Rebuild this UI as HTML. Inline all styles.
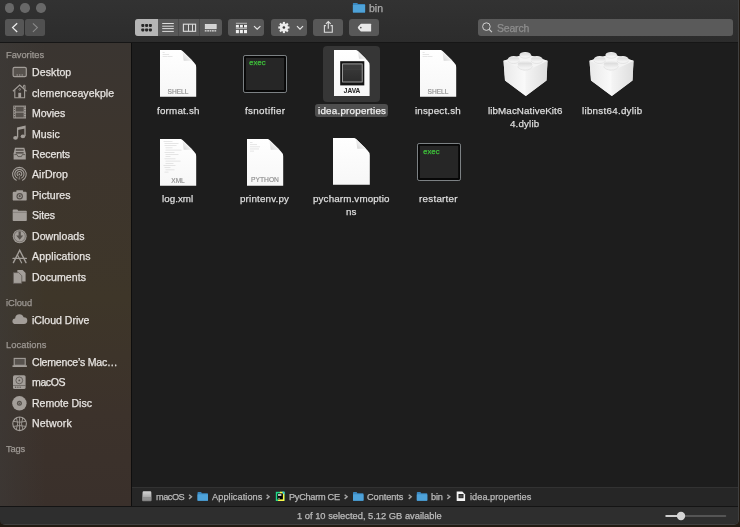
<!DOCTYPE html>
<html><head><meta charset="utf-8"><style>
*{margin:0;padding:0;box-sizing:border-box}
html,body{width:740px;height:527px;overflow:hidden;background:#221a12;font-family:"Liberation Sans",sans-serif}
.t{position:absolute;line-height:0;white-space:nowrap;will-change:transform;-webkit-text-stroke:0.25px currentColor}
.a{position:absolute}
svg{position:absolute;overflow:visible}
</style></head><body>
<div class="a" style="left:0;top:0;width:739px;height:525px;background:#404040;border-radius:0 0 5px 5px;overflow:hidden">
<div class="a" style="left:0;top:0;width:738px;height:524px;background:#1d1d1d;border-radius:0 0 4px 4px;overflow:hidden">
<div class="a" style="left:0;top:0;width:739px;height:43px;background:linear-gradient(#323232,#2c2c2c)"></div>
<div class="a" style="left:0;top:42px;width:739px;height:1px;background:#161616"></div>
<div class="a" style="left:4.60px;top:3.05px;width:9.6px;height:9.6px;border-radius:50%;background:#686868"></div>
<div class="a" style="left:20.40px;top:3.05px;width:9.6px;height:9.6px;border-radius:50%;background:#686868"></div>
<div class="a" style="left:36.20px;top:3.05px;width:9.6px;height:9.6px;border-radius:50%;background:#686868"></div>
<div class="a" style="left:5px;top:19px;width:19px;height:17px;background:#565656;border-radius:2.5px"></div>
<div class="a" style="left:25.4px;top:19px;width:19.6px;height:17px;background:#505050;border-radius:2.5px"></div>
<svg style="left:0;top:0" width="60" height="43">
<path d="M17.2 23.2 L12.6 27.6 L17.2 32" fill="none" stroke="#ebebeb" stroke-width="1.3"/>
<path d="M32.9 23.3 L37.4 27.6 L32.9 31.9" fill="none" stroke="#8a8a8a" stroke-width="1.1"/>
</svg>
<div class="a" style="left:135px;top:19px;width:87px;height:17px;background:#585858;border-radius:3px"></div>
<div class="a" style="left:135px;top:19px;width:23px;height:17px;background:#b5b5b5;border-radius:3px 0 0 3px"></div>
<div class="a" style="left:178.3px;top:19px;width:1px;height:17px;background:#4a4a4a"></div>
<div class="a" style="left:199px;top:19px;width:1px;height:17px;background:#4a4a4a"></div>
<svg style="left:0;top:0" width="230" height="43">
<g fill="#262626"><rect x="141.3" y="23.9" width="3" height="3" rx="0.8"/><rect x="141.3" y="28.4" width="3" height="3" rx="0.8"/><rect x="145.1" y="23.9" width="3" height="3" rx="0.8"/><rect x="145.1" y="28.4" width="3" height="3" rx="0.8"/><rect x="148.9" y="23.9" width="3" height="3" rx="0.8"/><rect x="148.9" y="28.4" width="3" height="3" rx="0.8"/></g>
<g fill="#dcdcdc"><rect x="162.2" y="23" width="11.6" height="1"/><rect x="162.2" y="25.7" width="11.6" height="1"/><rect x="162.2" y="28.1" width="11.6" height="1"/><rect x="162.2" y="30.9" width="11.6" height="1"/></g>
<rect x="183.4" y="24.2" width="12.2" height="7.1" fill="none" stroke="#dcdcdc" stroke-width="1.1"/>
<path d="M188.5 24.2 V31.3 M192.5 24.2 V31.3" stroke="#dcdcdc" stroke-width="1"/>
<rect x="205.2" y="24.3" width="11" height="4.5" fill="#d2d2d2"/>
<rect x="205.2" y="24.3" width="11" height="4.5" fill="none" stroke="#eeeeee" stroke-width="0.6"/>
<g fill="#dcdcdc"><rect x="204.80" y="30.2" width="1.8" height="1.3"/><rect x="207.20" y="30.2" width="1.8" height="1.3"/><rect x="209.60" y="30.2" width="1.8" height="1.3"/><rect x="212.00" y="30.2" width="1.8" height="1.3"/><rect x="214.40" y="30.2" width="1.8" height="1.3"/></g>
</svg>
<div class="a" style="left:228px;top:19px;width:36px;height:17px;background:#585858;border-radius:3px"></div>
<svg style="left:0;top:0" width="320" height="43">
<rect x="235.9" y="22.8" width="11.1" height="0.9" fill="#c4c4c4"/>
<rect x="235.9" y="24.9" width="11.1" height="2.6" fill="#3a3a3a"/>
<rect x="235.9" y="27.8" width="11.1" height="1" fill="#bdbdbd"/>
<rect x="235.9" y="24.9" width="3" height="2.6" fill="#f0f0f0"/><rect x="235.9" y="29.9" width="3" height="3.3" fill="#f0f0f0"/><rect x="239.9" y="24.9" width="3" height="2.6" fill="#f0f0f0"/><rect x="239.9" y="29.9" width="3" height="3.3" fill="#f0f0f0"/><rect x="244" y="24.9" width="3" height="2.6" fill="#f0f0f0"/><rect x="244" y="29.9" width="3" height="3.3" fill="#f0f0f0"/>
<path d="M254 26.1 L257.2 29.2 L260.4 26.1" fill="none" stroke="#e6e6e6" stroke-width="1.2"/>
</svg>
<div class="a" style="left:271px;top:19px;width:36px;height:17px;background:#585858;border-radius:3px"></div>
<svg style="left:0;top:0" width="320" height="43">
<g transform="translate(283.9,27.5)" fill="#ececec"><circle r="4.1"/><rect x="-1.05" y="-5.6" width="2.1" height="11.2" transform="rotate(0)"/><rect x="-1.05" y="-5.6" width="2.1" height="11.2" transform="rotate(45)"/><rect x="-1.05" y="-5.6" width="2.1" height="11.2" transform="rotate(90)"/><rect x="-1.05" y="-5.6" width="2.1" height="11.2" transform="rotate(135)"/><circle r="1.3" fill="#3a3a3a"/></g>
<path d="M297 26.1 L300 29.1 L303 26.1" fill="none" stroke="#e6e6e6" stroke-width="1.2"/>
</svg>
<div class="a" style="left:313px;top:19px;width:30px;height:17px;background:#585858;border-radius:3px"></div>
<svg style="left:0;top:0" width="400" height="43">
<path d="M325.9 25.6 H324.4 V32.3 H332.3 V25.6 H330.6" fill="none" stroke="#dcdcdc" stroke-width="1.1"/>
<path d="M328.3 21.8 V28.7 M325.9 23.9 L328.3 21.5 L330.7 23.9" fill="none" stroke="#dcdcdc" stroke-width="1.1"/>
</svg>
<div class="a" style="left:349px;top:19px;width:30px;height:17px;background:#585858;border-radius:3px"></div>
<svg style="left:0;top:0" width="400" height="43">
<path d="M357.8 27.6 Q357.8 27 358.3 26.4 L360.6 23.9 Q360.9 23.7 361.3 23.7 H370.6 Q371.1 23.7 371.1 24.2 V31.1 Q371.1 31.6 370.6 31.6 H361.3 Q360.9 31.6 360.6 31.3 L358.3 28.8 Q357.8 28.2 357.8 27.6 Z" fill="#e8e8e8"/>
<circle cx="360.8" cy="27.6" r="0.85" fill="#555"/>
</svg>
<svg style="left:0;top:0" width="400" height="43">
<path d="M352.9 3.6 Q352.9 3 353.5 3 H357.1 L358.1 4 H364.5 Q365.1 4 365.1 4.6 V11.9 Q365.1 12.5 364.5 12.5 H353.5 Q352.9 12.5 352.9 11.9 Z" fill="#3a88bf"/>
<rect x="352.9" y="5" width="12.2" height="7.5" rx="0.5" fill="#4ea2d8"/>
</svg>
<div class="t" style="left:368.80px;top:7.86px;font-size:10.5px;letter-spacing:-0.009px;color:#ababab;">bin</div>
<div class="a" style="left:478px;top:19px;width:255px;height:17px;background:#5a5a5a;border-radius:3px"></div>
<svg style="left:0;top:0" width="740" height="43">
<circle cx="486.4" cy="26.6" r="3.8" fill="none" stroke="#d0d0d0" stroke-width="1"/>
<path d="M489.2 29.4 L491.9 32.2" stroke="#d0d0d0" stroke-width="1.2"/>
</svg>
<div class="t" style="left:496.80px;top:27.56px;font-size:10.5px;letter-spacing:-0.197px;color:#8e8e8e;">Search</div>
<div class="a" style="left:0;top:43px;width:131px;height:463px;background:linear-gradient(90deg,rgba(62,60,58,0.55) 0%,rgba(62,60,58,0) 35%),linear-gradient(180deg,#3a3531 0%,#3d352d 25%,#3e3629 55%,#3c322b 80%,#3a302b 100%)"></div>
<div class="a" style="left:131px;top:43px;width:1px;height:463px;background:#0e0e0e"></div>
<svg style="left:0;top:0" width="131" height="527">
<g fill="none" stroke="#a39e99" stroke-width="1.1">
</g>
<!-- desktop -->
<rect x="13.1" y="67.3" width="13.2" height="9.4" rx="1.4" fill="#57524d" stroke="#a39e99" stroke-width="1.2"/>
<g fill="#a39e99"><rect x="16.6" y="74.4" width="1.2" height="1.2"/><rect x="19.1" y="74.4" width="1.2" height="1.2"/><rect x="21.6" y="74.4" width="1.2" height="1.2"/></g>
<!-- home -->
<path d="M12.9 91.2 L19.7 85 L26.5 91.2" fill="none" stroke="#a39e99" stroke-width="1.2"/>
<path d="M23.6 87.6 V85.3 H25 V89" fill="none" stroke="#a39e99" stroke-width="1"/>
<path d="M14.8 90 V97.7 H24.6 V90" fill="none" stroke="#a39e99" stroke-width="1.1"/>
<rect x="18.3" y="92.8" width="2.8" height="5" fill="#a39e99"/>
<circle cx="19.7" cy="89.4" r="0.9" fill="none" stroke="#a39e99" stroke-width="0.7"/>
<!-- movies -->
<rect x="13.3" y="105.6" width="12.7" height="12.9" fill="#a39e99"/>
<rect x="15.6" y="106.7" width="8.1" height="4.9" fill="#57524d"/>
<rect x="15.6" y="112.6" width="8.1" height="4.8" fill="#57524d"/>
<g fill="#57524d"><rect x="14.0" y="106.40" width="1" height="1.2"/><rect x="14.0" y="108.85" width="1" height="1.2"/><rect x="14.0" y="111.30" width="1" height="1.2"/><rect x="14.0" y="113.75" width="1" height="1.2"/><rect x="14.0" y="116.20" width="1" height="1.2"/><rect x="24.4" y="106.40" width="1" height="1.2"/><rect x="24.4" y="108.85" width="1" height="1.2"/><rect x="24.4" y="111.30" width="1" height="1.2"/><rect x="24.4" y="113.75" width="1" height="1.2"/><rect x="24.4" y="116.20" width="1" height="1.2"/></g>
<!-- music -->
<path d="M17.6 137.5 V128 L25 126.3 V136" fill="none" stroke="#a39e99" stroke-width="1.3"/>
<path d="M17.6 128 L25 126.3 V128.4 L17.6 130.1 Z" fill="#a39e99"/>
<ellipse cx="15.5" cy="137.9" rx="2.3" ry="1.8" fill="#a39e99"/>
<ellipse cx="22.9" cy="136.4" rx="2.3" ry="1.8" fill="#a39e99"/>
<!-- recents -->
<path d="M13.6 153.2 L15 147.8 H24.4 L25.8 153.2 V159.6 H13.6 Z" fill="#a39e99"/>
<rect x="15.8" y="149.2" width="7.8" height="1.6" fill="#57524d"/>
<rect x="15.8" y="152" width="7.8" height="1.6" fill="#57524d"/>
<path d="M14.4 154.6 H17 L18 156.6 H21.4 L22.4 154.6 H25" fill="none" stroke="#57524d" stroke-width="0.9"/>
<!-- airdrop -->
<g fill="none" stroke="#a39e99" stroke-width="1.1">
<path d="M16.6 180.4 A6.8 6.8 0 1 1 22.2 180.4"/>
<path d="M17.5 178.2 A4.6 4.6 0 1 1 21.3 178.2"/>
<path d="M18.4 176.1 A2.4 2.4 0 1 1 20.4 176.1"/>
</g>
<circle cx="19.4" cy="174.2" r="0.9" fill="#a39e99"/>
<path d="M19.4 175 L20.6 179.5 H18.2 Z" fill="#a39e99" opacity="0.6"/>
<!-- pictures -->
<rect x="12.7" y="191.8" width="14" height="8.8" rx="1.2" fill="#a39e99"/>
<rect x="16.3" y="190.2" width="6.8" height="2" rx="0.6" fill="#a39e99"/>
<circle cx="19.7" cy="196.2" r="3.2" fill="#57524d"/>
<circle cx="19.7" cy="196.2" r="2" fill="#a39e99"/>
<circle cx="19.7" cy="196.2" r="1.1" fill="#57524d"/>
<!-- sites (folder) -->
<path d="M12.7 210.3 Q12.7 209.5 13.5 209.5 H17.3 L18.3 210.8 H26 Q26.8 210.8 26.8 211.6 V220.3 Q26.8 221 26 221 H13.5 Q12.7 221 12.7 220.3 Z" fill="#a39e99"/>
<rect x="12.7" y="211.9" width="14.1" height="0.7" fill="#57524d" opacity="0.5"/>
<!-- downloads -->
<circle cx="19.7" cy="236.3" r="6.9" fill="#a39e99"/>
<circle cx="19.7" cy="236.3" r="5.6" fill="none" stroke="#57524d" stroke-width="0.6"/>
<path d="M18.6 231.5 H20.8 V235.6 H23.2 L19.7 239.8 L16.2 235.6 H18.6 Z" fill="#57524d"/>
<!-- applications -->
<g fill="none" stroke="#a39e99" stroke-width="1.2" stroke-linecap="round">
<path d="M13.4 262.6 L19.7 250.2 L26 262.6" stroke-width="1.4"/>
<path d="M13 258.4 H26.4"/>
<path d="M17.4 254.8 L21.6 262.8"/>
</g>
<!-- documents -->
<path d="M17.4 269.9 H22.6 L25.6 273 V281.4 H17.4 Z" fill="#a39e99"/>
<path d="M13.3 272.6 H18.7 L21.8 275.7 V283.4 H13.3 Z" fill="#a39e99" stroke="#57524d" stroke-width="0.7"/>
<!-- icloud -->
<path d="M15.6 324 Q12.4 324 12.4 321.2 Q12.4 318.6 15.1 318.4 Q15.6 314.2 19.5 314.2 Q22.6 314.2 23.6 317.3 Q27.3 317.3 27.3 320.6 Q27.3 324 24 324 Z" fill="#a39e99"/>
<!-- laptop -->
<rect x="14.2" y="358.4" width="11" height="6.9" fill="#57524d" stroke="#a39e99" stroke-width="1.1"/>
<rect x="12.5" y="365.3" width="14.4" height="1.7" fill="#a39e99"/>
<!-- macOS drive -->
<rect x="13" y="375.2" width="12.6" height="13.8" rx="1.6" fill="#a39e99"/>
<circle cx="19.3" cy="380.4" r="3.4" fill="none" stroke="#57524d" stroke-width="0.8"/>
<circle cx="19.3" cy="380.4" r="0.9" fill="#57524d"/>
<rect x="13" y="385.2" width="12.6" height="0.6" fill="#57524d"/>
<g fill="#57524d"><rect x="15" y="386.6" width="1.2" height="1.2"/><rect x="17.3" y="386.6" width="1.2" height="1.2"/><rect x="19.6" y="386.6" width="1.2" height="1.2"/></g>
<!-- remote disc -->
<circle cx="19.4" cy="403.3" r="7.2" fill="#a39e99"/>
<circle cx="19.4" cy="403.3" r="2.5" fill="#57524d"/>
<circle cx="19.4" cy="403.3" r="1.3" fill="#8a857f"/>
<circle cx="19.4" cy="403.3" r="0.6" fill="#57524d"/>
<!-- network -->
<g fill="none" stroke="#a39e99" stroke-width="0.9">
<circle cx="19.6" cy="423.8" r="6.8" stroke-width="1.1"/>
<path d="M13.3 421.4 Q19.6 423 25.9 421.4 M13.3 426.4 Q19.6 424.8 25.9 426.4"/>
<path d="M16.5 417.8 Q19 423.8 16.2 429.9 M22.7 417.8 Q20.2 423.8 23 429.9"/>
<path d="M19.6 417 V430.6"/>
</g>
</svg>
<div class="t" style="left:5.70px;top:54.58px;font-size:9.3px;letter-spacing:-0.015px;color:#9d9893;">Favorites</div>
<div class="t" style="left:31.75px;top:72.24px;font-size:10.55px;letter-spacing:0.089px;color:#e7e4e1;">Desktop</div>
<div class="t" style="left:31.75px;top:92.69px;font-size:10.55px;letter-spacing:0.039px;color:#e7e4e1;">clemenceayekple</div>
<div class="t" style="left:31.75px;top:113.14px;font-size:10.55px;letter-spacing:-0.039px;color:#e7e4e1;">Movies</div>
<div class="t" style="left:31.75px;top:133.59px;font-size:10.55px;letter-spacing:0.079px;color:#e7e4e1;">Music</div>
<div class="t" style="left:31.75px;top:154.04px;font-size:10.55px;letter-spacing:-0.111px;color:#e7e4e1;">Recents</div>
<div class="t" style="left:31.75px;top:174.49px;font-size:10.55px;letter-spacing:0.014px;color:#e7e4e1;">AirDrop</div>
<div class="t" style="left:31.75px;top:194.94px;font-size:10.55px;letter-spacing:0.052px;color:#e7e4e1;">Pictures</div>
<div class="t" style="left:31.75px;top:215.39px;font-size:10.55px;letter-spacing:-0.081px;color:#e7e4e1;">Sites</div>
<div class="t" style="left:31.75px;top:235.84px;font-size:10.55px;letter-spacing:0.035px;color:#e7e4e1;">Downloads</div>
<div class="t" style="left:31.75px;top:256.29px;font-size:10.55px;letter-spacing:0.144px;color:#e7e4e1;">Applications</div>
<div class="t" style="left:31.75px;top:276.74px;font-size:10.55px;letter-spacing:0.083px;color:#e7e4e1;">Documents</div>
<div class="t" style="left:5.70px;top:302.78px;font-size:9.3px;letter-spacing:-0.053px;color:#9d9893;">iCloud</div>
<div class="t" style="left:31.75px;top:319.94px;font-size:10.55px;letter-spacing:0.000px;color:#e7e4e1;">iCloud Drive</div>
<div class="t" style="left:5.70px;top:345.18px;font-size:9.3px;letter-spacing:0.087px;color:#9d9893;">Locations</div>
<div class="t" style="left:31.75px;top:362.04px;font-size:10.55px;letter-spacing:-0.193px;color:#e7e4e1;">Clemence’s Mac…</div>
<div class="t" style="left:31.75px;top:382.49px;font-size:10.55px;letter-spacing:-0.409px;color:#e7e4e1;">macOS</div>
<div class="t" style="left:31.75px;top:402.94px;font-size:10.55px;letter-spacing:-0.045px;color:#e7e4e1;">Remote Disc</div>
<div class="t" style="left:31.75px;top:423.39px;font-size:10.55px;letter-spacing:0.196px;color:#e7e4e1;">Network</div>
<div class="t" style="left:5.70px;top:449.18px;font-size:9.3px;letter-spacing:-0.174px;color:#9d9893;">Tags</div>
<svg width="0" height="0" style="position:absolute">
<defs>
<linearGradient id="pg" x1="0" y1="0" x2="0" y2="1"><stop offset="0" stop-color="#ffffff"/><stop offset="1" stop-color="#f7f7f7"/></linearGradient>
<linearGradient id="flap" x1="0" y1="1" x2="1" y2="0"><stop offset="0" stop-color="#d2d2d2"/><stop offset="0.45" stop-color="#efefef"/><stop offset="1" stop-color="#ffffff"/></linearGradient>
<linearGradient id="bl" x1="0" y1="0" x2="1" y2="0"><stop offset="0" stop-color="#e9e9e9"/><stop offset="1" stop-color="#fafafa"/></linearGradient>
<linearGradient id="br" x1="0" y1="0" x2="1" y2="0"><stop offset="0" stop-color="#f4f4f4"/><stop offset="1" stop-color="#dedede"/></linearGradient>
<linearGradient id="stud" x1="0" y1="0" x2="0" y2="1"><stop offset="0" stop-color="#f4f4f4"/><stop offset="0.35" stop-color="#dedede"/><stop offset="1" stop-color="#f6f6f6"/></linearGradient>
<linearGradient id="jv" x1="0" y1="0" x2="0" y2="1"><stop offset="0" stop-color="#3c3c3c"/><stop offset="0.3" stop-color="#3a3a3a"/><stop offset="0.33" stop-color="#444444"/><stop offset="0.36" stop-color="#363636"/><stop offset="1" stop-color="#2c2c2c"/></linearGradient>
</defs></svg>
<div class="a" style="left:323.2px;top:45.9px;width:56.8px;height:56.6px;background:#363636;border-radius:4px"></div>
<svg style="left:159.9px;top:50.1px" width="36.2" height="46.7"><path d="M0 0 H20.60 Q21.50 0 22.20 0.7 L33.80 12.30 Q36.2 14.50 36.2 17.30 V46.7 H0 Z" fill="url(#pg)"/><path d="M22.40 0.9 L23.70 10.80 L32.60 10.80 Z" fill="url(#flap)"/></svg>
<svg style="left:159.9px;top:50.1px" width="30" height="40"><rect x="2.6" y="2.1" width="2" height="0.55" fill="#d2d2d2"/><rect x="2.6" y="4.1" width="6.5" height="0.55" fill="#d2d2d2"/><rect x="2.6" y="6.2" width="5" height="0.55" fill="#d2d2d2"/><rect x="8" y="6.2" width="4.5" height="0.55" fill="#d2d2d2"/></svg>
<div class="t" style="left:158.20px;top:92.01px;width:40px;text-align:center;font-size:6.6px;color:#8e8e8e;-webkit-text-stroke:0.15px currentColor;">SHELL</div>
<svg style="left:243px;top:54.8px" width="44" height="38"><rect x="0.5" y="0.5" width="43" height="37" rx="1.6" fill="#070707" stroke="#7c8184" stroke-width="1"/><rect x="2.8" y="2.8" width="38.4" height="32.2" fill="#262626"/></svg>
<div class="t" style="left:249px;top:63.3px;font-family:'Liberation Mono',monospace;font-size:7.4px;color:#3fc43b;letter-spacing:-0.3px">exec</div>
<svg style="left:333.9px;top:49.7px" width="35.6" height="46.1"><path d="M0 0 H22.00 Q22.90 0 23.60 0.7 L33.20 10.30 Q35.6 12.50 35.6 15.30 V46.1 H0 Z" fill="url(#pg)"/><path d="M23.80 0.9 L25.10 8.80 L32.00 8.80 Z" fill="url(#flap)"/></svg>
<svg style="left:333.9px;top:49.7px" width="36" height="47"><rect x="6.2" y="11.2" width="24.1" height="24.2" fill="#141414"/><rect x="8.6" y="13.9" width="19.6" height="18.1" fill="url(#jv)" stroke="#b4b4b4" stroke-width="0.8"/></svg>
<div class="t" style="left:331.80px;top:91.43px;width:40px;text-align:center;font-size:6.55px;color:#2a2a2a;font-weight:bold;-webkit-text-stroke:0.1px currentColor;">JAVA</div>
<svg style="left:420.2px;top:50.1px" width="36.2" height="46.7"><path d="M0 0 H20.60 Q21.50 0 22.20 0.7 L33.80 12.30 Q36.2 14.50 36.2 17.30 V46.7 H0 Z" fill="url(#pg)"/><path d="M22.40 0.9 L23.70 10.80 L32.60 10.80 Z" fill="url(#flap)"/></svg>
<svg style="left:420.2px;top:50.1px" width="30" height="40"><rect x="2.6" y="2.1" width="2" height="0.55" fill="#d2d2d2"/><rect x="2.6" y="4.1" width="6.5" height="0.55" fill="#d2d2d2"/><rect x="2.6" y="6.2" width="5" height="0.55" fill="#d2d2d2"/><rect x="8" y="6.2" width="4.5" height="0.55" fill="#d2d2d2"/></svg>
<div class="t" style="left:418.40px;top:92.01px;width:40px;text-align:center;font-size:6.6px;color:#8e8e8e;-webkit-text-stroke:0.15px currentColor;">SHELL</div>
<svg style="left:0;top:0" width="740" height="300"><polygon points="503.50,60.80 525.80,54.10 547.50,60.80 546.50,80.60 525.80,95.90 505.00,80.60" fill="#ececec"/><polygon points="503.50,60.80 525.80,71.20 525.80,95.90 505.00,80.60" fill="url(#bl)"/><polygon points="525.80,71.20 547.50,60.80 546.50,80.60 525.80,95.90" fill="url(#br)"/><polygon points="503.50,60.80 525.80,54.10 547.50,60.80 525.80,71.20" fill="#f4f4f4"/><path d="M519.70 54.50 V55.70 A5.5 2.5 0 0 0 530.70 55.70 V54.50 Z" fill="#f2f2f2"/><path d="M519.70 55.70 A5.5 2.5 0 0 0 530.70 55.70" fill="none" stroke="#d6d6d6" stroke-width="0.5"/><ellipse cx="525.20" cy="54.50" rx="5.5" ry="2.5" fill="url(#stud)"/><path d="M507.90 59.00 V60.60 A5.8 2.95 0 0 0 519.50 60.60 V59.00 Z" fill="#f2f2f2"/><path d="M507.90 60.60 A5.8 2.95 0 0 0 519.50 60.60" fill="none" stroke="#d6d6d6" stroke-width="0.5"/><ellipse cx="513.70" cy="59.00" rx="5.8" ry="2.95" fill="url(#stud)"/><path d="M531.00 59.00 V60.60 A5.8 2.95 0 0 0 542.60 60.60 V59.00 Z" fill="#f2f2f2"/><path d="M531.00 60.60 A5.8 2.95 0 0 0 542.60 60.60" fill="none" stroke="#d6d6d6" stroke-width="0.5"/><ellipse cx="536.80" cy="59.00" rx="5.8" ry="2.95" fill="url(#stud)"/><path d="M517.80 64.60 V66.20 A7.3 3.9 0 0 0 532.40 66.20 V64.60 Z" fill="#f2f2f2"/><path d="M517.80 66.20 A7.3 3.9 0 0 0 532.40 66.20" fill="none" stroke="#d6d6d6" stroke-width="0.5"/><ellipse cx="525.10" cy="64.60" rx="7.3" ry="3.9" fill="url(#stud)"/></svg>
<svg style="left:0;top:0" width="740" height="300"><polygon points="589.50,60.80 611.80,54.10 633.50,60.80 632.50,80.60 611.80,95.90 591.00,80.60" fill="#ececec"/><polygon points="589.50,60.80 611.80,71.20 611.80,95.90 591.00,80.60" fill="url(#bl)"/><polygon points="611.80,71.20 633.50,60.80 632.50,80.60 611.80,95.90" fill="url(#br)"/><polygon points="589.50,60.80 611.80,54.10 633.50,60.80 611.80,71.20" fill="#f4f4f4"/><path d="M605.70 54.50 V55.70 A5.5 2.5 0 0 0 616.70 55.70 V54.50 Z" fill="#f2f2f2"/><path d="M605.70 55.70 A5.5 2.5 0 0 0 616.70 55.70" fill="none" stroke="#d6d6d6" stroke-width="0.5"/><ellipse cx="611.20" cy="54.50" rx="5.5" ry="2.5" fill="url(#stud)"/><path d="M593.90 59.00 V60.60 A5.8 2.95 0 0 0 605.50 60.60 V59.00 Z" fill="#f2f2f2"/><path d="M593.90 60.60 A5.8 2.95 0 0 0 605.50 60.60" fill="none" stroke="#d6d6d6" stroke-width="0.5"/><ellipse cx="599.70" cy="59.00" rx="5.8" ry="2.95" fill="url(#stud)"/><path d="M617.00 59.00 V60.60 A5.8 2.95 0 0 0 628.60 60.60 V59.00 Z" fill="#f2f2f2"/><path d="M617.00 60.60 A5.8 2.95 0 0 0 628.60 60.60" fill="none" stroke="#d6d6d6" stroke-width="0.5"/><ellipse cx="622.80" cy="59.00" rx="5.8" ry="2.95" fill="url(#stud)"/><path d="M603.80 64.60 V66.20 A7.3 3.9 0 0 0 618.40 66.20 V64.60 Z" fill="#f2f2f2"/><path d="M603.80 66.20 A7.3 3.9 0 0 0 618.40 66.20" fill="none" stroke="#d6d6d6" stroke-width="0.5"/><ellipse cx="611.10" cy="64.60" rx="7.3" ry="3.9" fill="url(#stud)"/></svg>
<svg style="left:159.9px;top:138.5px" width="36.2" height="46.7"><path d="M0 0 H20.60 Q21.50 0 22.20 0.7 L33.80 12.30 Q36.2 14.50 36.2 17.30 V46.7 H0 Z" fill="url(#pg)"/><path d="M22.40 0.9 L23.70 10.80 L32.60 10.80 Z" fill="url(#flap)"/></svg>
<svg style="left:159.9px;top:138.5px" width="30" height="40"><rect x="3.5" y="2.0" width="9" height="0.55" fill="#d2d2d2"/><rect x="4.5" y="4.2" width="14" height="0.55" fill="#d2d2d2"/><rect x="4.5" y="6.4" width="12" height="0.55" fill="#d2d2d2"/><rect x="5.5" y="8.600000000000001" width="7" height="0.55" fill="#d2d2d2"/><rect x="5.5" y="10.8" width="16" height="0.55" fill="#d2d2d2"/><rect x="4.5" y="13.0" width="10" height="0.55" fill="#d2d2d2"/><rect x="5.5" y="15.200000000000001" width="13" height="0.55" fill="#d2d2d2"/><rect x="5.5" y="17.400000000000002" width="5" height="0.55" fill="#d2d2d2"/><rect x="4.5" y="19.6" width="11" height="0.55" fill="#d2d2d2"/><rect x="5.5" y="21.8" width="15" height="0.55" fill="#d2d2d2"/><rect x="5.5" y="24.0" width="8" height="0.55" fill="#d2d2d2"/><rect x="3.5" y="26.200000000000003" width="12" height="0.55" fill="#d2d2d2"/><rect x="4.5" y="28.400000000000002" width="6" height="0.55" fill="#d2d2d2"/><rect x="5.5" y="30.6" width="9" height="0.55" fill="#d2d2d2"/><rect x="4.5" y="32.800000000000004" width="4" height="0.55" fill="#d2d2d2"/></svg>
<div class="t" style="left:158.20px;top:180.55px;width:40px;text-align:center;font-size:6.5px;color:#8e8e8e;-webkit-text-stroke:0.15px currentColor;">XML</div>
<svg style="left:246.8px;top:138.5px" width="36.2" height="46.7"><path d="M0 0 H20.60 Q21.50 0 22.20 0.7 L33.80 12.30 Q36.2 14.50 36.2 17.30 V46.7 H0 Z" fill="url(#pg)"/><path d="M22.40 0.9 L23.70 10.80 L32.60 10.80 Z" fill="url(#flap)"/></svg>
<svg style="left:246.8px;top:138.5px" width="30" height="40"><rect x="3" y="3" width="2.5" height="0.55" fill="#d2d2d2"/><rect x="3" y="5.5" width="7" height="0.55" fill="#d2d2d2"/><rect x="3" y="7.6" width="10" height="0.55" fill="#d2d2d2"/><rect x="3" y="9.7" width="9" height="0.55" fill="#d2d2d2"/><rect x="3" y="11.8" width="4" height="0.55" fill="#d2d2d2"/></svg>
<div class="t" style="left:245.00px;top:180.48px;width:40px;text-align:center;font-size:6.7px;color:#8e8e8e;-webkit-text-stroke:0.15px currentColor;">PYTHON</div>
<svg style="left:333.3px;top:137.8px" width="36.8" height="46.8"><path d="M0 0 H21.20 Q22.10 0 22.80 0.7 L34.40 12.30 Q36.8 14.50 36.8 17.30 V46.8 H0 Z" fill="url(#pg)"/><path d="M23.00 0.9 L24.30 10.80 L33.20 10.80 Z" fill="url(#flap)"/></svg>
<svg style="left:416.7px;top:143.1px" width="44" height="38"><rect x="0.5" y="0.5" width="43" height="37" rx="1.6" fill="#070707" stroke="#7c8184" stroke-width="1"/><rect x="2.8" y="2.8" width="38.4" height="32.2" fill="#262626"/></svg>
<div class="t" style="left:422.7px;top:151.6px;font-family:'Liberation Mono',monospace;font-size:7.4px;color:#3fc43b;letter-spacing:-0.3px">exec</div>
<div class="a" style="left:315.2px;top:104.1px;width:72.5px;height:13.2px;background:#4e4e4e;border-radius:3px"></div>
<div class="t" style="left:156.50px;top:111.30px;font-size:9.8px;letter-spacing:0.204px;color:#dedede;">format.sh</div>
<div class="t" style="left:244.80px;top:111.30px;font-size:9.8px;letter-spacing:0.328px;color:#dedede;">fsnotifier</div>
<div class="t" style="left:317.50px;top:111.30px;font-size:9.8px;letter-spacing:0.227px;color:#f0f0f0;">idea.properties</div>
<div class="t" style="left:415.00px;top:111.30px;font-size:9.8px;letter-spacing:0.183px;color:#dedede;">inspect.sh</div>
<div class="t" style="left:487.80px;top:111.30px;font-size:9.8px;letter-spacing:0.093px;color:#dedede;">libMacNativeKit6</div>
<div class="t" style="left:581.70px;top:111.30px;font-size:9.8px;letter-spacing:0.266px;color:#dedede;">libnst64.dylib</div>
<div class="t" style="left:510.40px;top:123.50px;font-size:9.8px;letter-spacing:0.146px;color:#dedede;">4.dylib</div>
<div class="t" style="left:161.80px;top:199.30px;font-size:9.8px;letter-spacing:0.022px;color:#dedede;">log.xml</div>
<div class="t" style="left:239.90px;top:199.30px;font-size:9.8px;letter-spacing:0.176px;color:#dedede;">printenv.py</div>
<div class="t" style="left:313.10px;top:199.30px;font-size:9.8px;letter-spacing:0.134px;color:#dedede;">pycharm.vmoptio</div>
<div class="t" style="left:418.80px;top:199.30px;font-size:9.8px;letter-spacing:0.262px;color:#dedede;">restarter</div>
<div class="t" style="left:345.90px;top:211.50px;font-size:9.8px;letter-spacing:0.061px;color:#dedede;">ns</div>
<div class="a" style="left:132px;top:486px;width:607px;height:20px;background:#1d1d1d"></div>
<div class="a" style="left:132px;top:487px;width:607px;height:19px;background:#262626"></div>
<div class="a" style="left:132px;top:487px;width:607px;height:1px;background:#323232"></div>
<svg style="left:0;top:0" width="740" height="527"><defs><linearGradient id="dk" x1="0" y1="0" x2="0" y2="1"><stop offset="0" stop-color="#d4d4d4"/><stop offset="0.6" stop-color="#a9a9a9"/><stop offset="1" stop-color="#7a7a7a"/></linearGradient></defs><path d="M142.6 492.3 Q142.6 491.2 143.7 491.2 H150.2 Q151.3 491.2 151.3 492.3 L151.6 500.3 Q151.6 501.2 150.7 501.2 H143 Q142.1 501.2 142.1 500.3 Z" fill="url(#dk)"/><rect x="142.4" y="497.6" width="9" height="0.6" fill="#6e6e6e"/><path d="M197.5 492.8 Q197.5 492 198.3 492 H201.1 L201.9 493.3 H207.3 Q208.0 493.3 208.0 494 V500.1 Q208.0 500.8 207.3 500.8 H198.2 Q197.5 500.8 197.5 500.1 Z" fill="#3a87bf"/><rect x="197.5" y="494.3" width="10.5" height="6.5" rx="0.6" fill="#4ea2d9"/><path d="M353 492.8 Q353 492 353.8 492 H356.6 L357.4 493.3 H362.8 Q363.5 493.3 363.5 494 V500.1 Q363.5 500.8 362.8 500.8 H353.7 Q353 500.8 353 500.1 Z" fill="#3a87bf"/><rect x="353" y="494.3" width="10.5" height="6.5" rx="0.6" fill="#4ea2d9"/><path d="M416.8 492.8 Q416.8 492 417.6 492 H420.40000000000003 L421.2 493.3 H426.6 Q427.3 493.3 427.3 494 V500.1 Q427.3 500.8 426.6 500.8 H417.5 Q416.8 500.8 416.8 500.1 Z" fill="#3a87bf"/><rect x="416.8" y="494.3" width="10.5" height="6.5" rx="0.6" fill="#4ea2d9"/><rect x="275.8" y="491.8" width="8.6" height="9.2" fill="#21d789"/><path d="M280 491.8 H284.4 V501 H278 Z" fill="#fcf84a"/><path d="M282 491.8 H284.4 V495 Z" fill="#07c3f2"/><rect x="277.3" y="493.4" width="5.6" height="6" fill="#000"/><rect x="278" y="494.2" width="3.4" height="1.6" fill="#e8e8e8"/><rect x="278" y="497.9" width="2" height="0.6" fill="#e8e8e8"/><path d="M456.7 491.6 H462.3 L465.1 494.4 V501 H456.7 Z" fill="#f4f4f4"/><rect x="458.5" y="494" width="5" height="4.2" fill="#222"/><rect x="459.2" y="494.7" width="3.6" height="2.8" fill="#4a4a4a"/></svg>
<div class="t" style="left:155.90px;top:496.71px;font-size:9.2px;letter-spacing:-0.471px;color:#b9b9b9;">macOS</div>
<div class="t" style="left:212.00px;top:496.71px;font-size:9.2px;letter-spacing:0.074px;color:#b9b9b9;">Applications</div>
<div class="t" style="left:288.90px;top:496.71px;font-size:9.2px;letter-spacing:-0.287px;color:#b9b9b9;">PyCharm CE</div>
<div class="t" style="left:367.40px;top:496.71px;font-size:9.2px;letter-spacing:-0.049px;color:#b9b9b9;">Contents</div>
<div class="t" style="left:431.00px;top:496.71px;font-size:9.2px;letter-spacing:-0.141px;color:#b9b9b9;">bin</div>
<div class="t" style="left:470.00px;top:496.71px;font-size:9.2px;letter-spacing:0.039px;color:#b9b9b9;">idea.properties</div>
<svg style="left:0;top:0" width="740" height="527"><path d="M189.0 494.7 L191.5 496.8 L189.0 498.9" fill="none" stroke="#a4a4a4" stroke-width="1.45"/><path d="M266.6 494.7 L269.1 496.8 L266.6 498.9" fill="none" stroke="#a4a4a4" stroke-width="1.45"/><path d="M344.6 494.7 L347.1 496.8 L344.6 498.9" fill="none" stroke="#a4a4a4" stroke-width="1.45"/><path d="M408.7 494.7 L411.2 496.8 L408.7 498.9" fill="none" stroke="#a4a4a4" stroke-width="1.45"/><path d="M447.3 494.7 L449.8 496.8 L447.3 498.9" fill="none" stroke="#a4a4a4" stroke-width="1.45"/></svg>
<div class="a" style="left:0;top:506px;width:739px;height:18px;background:#2e2e2e"></div>
<div class="a" style="left:0;top:506px;width:739px;height:1px;background:#141414"></div>
<div class="t" style="left:297.10px;top:515.76px;font-size:9.34px;letter-spacing:0.001px;color:#bcbcbc;">1 of 10 selected, 5.12 GB available</div>
<svg style="left:0;top:0" width="740" height="527">
<rect x="665.3" y="515" width="61" height="2" rx="1" fill="#555"/>
<rect x="665.3" y="515" width="16" height="2" rx="1" fill="#cfcfcf"/>
<circle cx="681" cy="516" r="4.2" fill="#d4d4d4"/>
</svg>
</div></div>
</body></html>
